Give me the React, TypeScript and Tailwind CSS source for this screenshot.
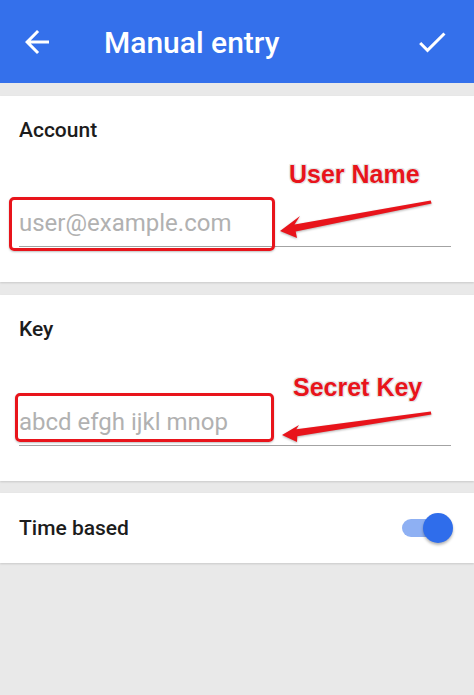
import React from "react";

const ROBOTO = "font-['Roboto',_'Noto_Sans',_sans-serif]";

function BackIcon() {
  return (
    <svg width="36" height="36" viewBox="0 0 24 24" fill="#ffffff">
      <path d="M20 11H7.83l5.59-5.59L12 4l-8 8 8 8 1.41-1.41L7.83 13H20v-2z" />
    </svg>
  );
}

function CheckIcon() {
  return (
    <svg width="36" height="36" viewBox="0 0 24 24" fill="#ffffff">
      <path d="M9 16.17L4.83 12l-1.42 1.41L9 19 21 7l-1.41-1.41z" />
    </svg>
  );
}

function Callout({ label, top, left }: { label: string; top: number; left: number }) {
  return (
    <div
      className="absolute font-['Liberation_Sans',_Arial,_sans-serif] text-[25px] leading-[25px] font-bold text-[#e8141b] whitespace-nowrap [text-shadow:-1px_-1px_0_#e6e6e6,1px_-1px_0_#e6e6e6,-1px_1px_0_#e6e6e6,1px_1px_0_#e6e6e6,0_0_2px_#bbbbbb]"
      style={{ top, left }}
    >
      {label}
    </div>
  );
}

function Field({
  label,
  placeholder,
  children,
}: {
  label: string;
  placeholder: string;
  children?: React.ReactNode;
}) {
  return (
    <section className="relative bg-white pl-[19px] pr-[23px] pt-[22px] pb-[35px] shadow-[0_1px_2px_rgba(0,0,0,0.14)]">
      <div className={`${ROBOTO} text-[21px] leading-[24px] font-medium text-[#1c1c1c]`}>{label}</div>
      <div className="mt-[67px] border-b border-[#a3a3a3] pb-[9px]">
        <div className={`${ROBOTO} text-[24px] leading-[28px] text-[#b1b1b1]`}>{placeholder}</div>
      </div>
      {children}
    </section>
  );
}

export default function App() {
  return (
    <div className="h-[695px] w-[474px] overflow-hidden bg-[#e9e9e9] flex flex-col">
      <header className="h-[83px] shrink-0 bg-[#3470eb] flex items-center pl-[19px] pr-[24px]">
        <BackIcon />
        <h1 className={`${ROBOTO} ml-[49px] mt-[2px] text-[30px] leading-[34px] font-medium text-white`}>
          Manual entry
        </h1>
        <div className="ml-auto">
          <CheckIcon />
        </div>
      </header>

      <div className="mt-[13px]">
        <Field label="Account" placeholder="user@example.com">
          <div className="absolute left-[9px] top-[101px] w-[266px] h-[54px] rounded-[5px] border-[3px] border-[#e8141b] shadow-[0_1px_2px_rgba(0,0,0,0.25)]" />
          <Callout label="User Name" top={66} left={289} />
          <svg className="absolute left-0 top-0 drop-shadow-[0_1px_1px_rgba(0,0,0,0.3)]" width="474" height="186">
            <polygon
              points="280,135 300,120 294.5,128.6 430.7,104.5 431.6,107.5 295.7,135.4 297,142"
              fill="#e8141b"
            />
          </svg>
        </Field>
      </div>

      <div className="mt-[13px]">
        <Field label="Key" placeholder="abcd efgh ijkl mnop">
          <div className="absolute left-[15px] top-[98px] w-[259px] h-[49px] rounded-[5px] border-[3px] border-[#e8141b] shadow-[0_1px_2px_rgba(0,0,0,0.25)]" />
          <Callout label="Secret Key" top={80} left={293} />
          <svg className="absolute left-0 top-0 drop-shadow-[0_1px_1px_rgba(0,0,0,0.3)]" width="474" height="187">
            <polygon
              points="282,140 299,130 296.3,134.3 430.8,116.5 431.4,119.5 297.3,141.3 297,147"
              fill="#e8141b"
            />
          </svg>
        </Field>
      </div>

      <section className="mt-[12px] h-[70px] bg-white flex items-center pl-[19px] pr-[21px] shadow-[0_1px_2px_rgba(0,0,0,0.14)]">
        <span className={`${ROBOTO} text-[21px] leading-[24px] font-medium text-[#1c1c1c]`}>Time based</span>
        <div className="ml-auto relative w-[51px] h-[30px]">
          <div className="absolute left-0 top-[6px] w-[43px] h-[18px] rounded-full bg-[#8eb0f3]" />
          <div className="absolute right-0 top-0 w-[30px] h-[30px] rounded-full bg-[#2f6deb] shadow-[0_2px_3px_rgba(0,0,0,0.3)]" />
        </div>
      </section>
    </div>
  );
}
